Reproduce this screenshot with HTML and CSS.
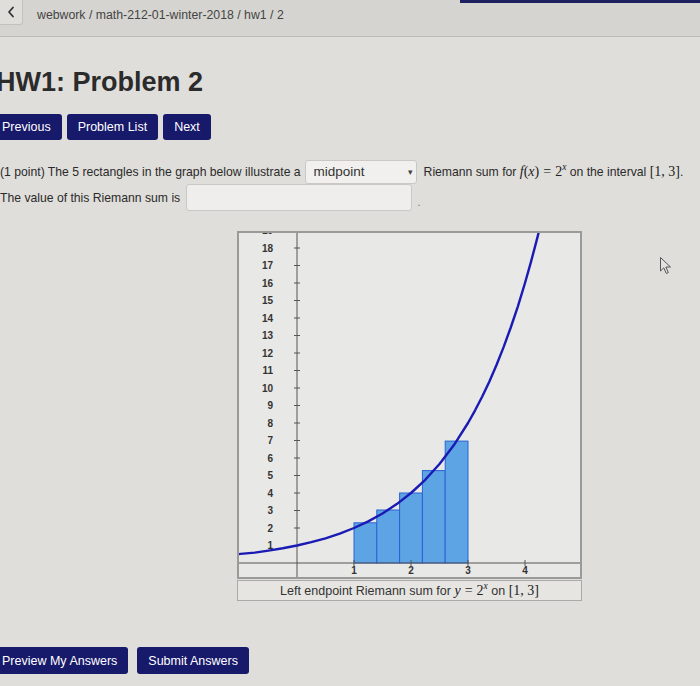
FILE: index.html
```html
<!DOCTYPE html>
<html lang="en">
<head>
<meta charset="utf-8">
<title>HW1: Problem 2</title>
<link rel="stylesheet" href="styles.css">
</head>
<body>
<header class="topbar">
  <a class="back" href="#"><svg width="8" height="12" viewBox="0 0 8 12"><path d="M6 1.5 L2 6 L6 10.5" fill="none" stroke="#333" stroke-width="1.8" stroke-linecap="round" stroke-linejoin="round"/></svg></a>
  <span class="crumbs">webwork / math-212-01-winter-2018 / hw1 / 2</span>
  <div class="strip"></div>
</header>
<main class="page">
  <h1>HW1: Problem 2</h1>
  <nav class="probnav">
    <button class="btn first">Previous</button>
    <button class="btn">Problem List</button>
    <button class="btn">Next</button>
  </nav>
  <div class="line1">
    <span>(1 point) The 5 rectangles in the graph below illustrate a</span>
    <span class="select">midpoint<span class="caret">&#9662;</span></span>
    <span class="after">Riemann sum for <span class="math"><i>f</i>(<i>x</i>)<span class="eq">=</span>2<sup><i>x</i></sup></span> on the interval <span class="math">[1, 3]</span>.</span>
  </div>
  <div class="line2">
    <span>The value of this Riemann sum is</span>
    <span class="input"></span>
    <span class="dot">.</span>
  </div>
  <figure class="graph">
    <div class="plot">
      <svg width="341" height="344" viewBox="0 0 341 344">
        <g class="rects">
          <rect x="115" y="289.8" width="22.8" height="40.2"/>
          <rect x="137.8" y="277" width="22.8" height="53"/>
          <rect x="160.6" y="260" width="22.8" height="70"/>
          <rect x="183.4" y="237.6" width="22.8" height="92.4"/>
          <rect x="206.2" y="208.1" width="22.8" height="121.9"/>
        </g>
        <line x1="0" y1="330" x2="341" y2="330" class="axis"/>
        <line x1="58" y1="0" x2="58" y2="344" class="axis"/>
        <g class="ticks">
          <line x1="55" x2="61" y1="312.5" y2="312.5"/><line x1="55" x2="61" y1="295" y2="295"/>
          <line x1="55" x2="61" y1="277.5" y2="277.5"/><line x1="55" x2="61" y1="260" y2="260"/>
          <line x1="55" x2="61" y1="242.5" y2="242.5"/><line x1="55" x2="61" y1="225" y2="225"/>
          <line x1="55" x2="61" y1="207.5" y2="207.5"/><line x1="55" x2="61" y1="190" y2="190"/>
          <line x1="55" x2="61" y1="172.5" y2="172.5"/><line x1="55" x2="61" y1="155" y2="155"/>
          <line x1="55" x2="61" y1="137.5" y2="137.5"/><line x1="55" x2="61" y1="120" y2="120"/>
          <line x1="55" x2="61" y1="102.5" y2="102.5"/><line x1="55" x2="61" y1="85" y2="85"/>
          <line x1="55" x2="61" y1="67.5" y2="67.5"/><line x1="55" x2="61" y1="50" y2="50"/>
          <line x1="55" x2="61" y1="32.5" y2="32.5"/><line x1="55" x2="61" y1="15" y2="15"/>
          <line x1="115" x2="115" y1="327" y2="333"/><line x1="172" x2="172" y1="327" y2="333"/>
          <line x1="229" x2="229" y1="327" y2="333"/><line x1="286" x2="286" y1="327" y2="333"/>
        </g>
        <g class="ylab">
          <text x="34" y="316">1</text><text x="34" y="298.5">2</text><text x="34" y="281">3</text>
          <text x="34" y="263.5">4</text><text x="34" y="246">5</text><text x="34" y="228.5">6</text>
          <text x="34" y="211">7</text><text x="34" y="193.5">8</text><text x="34" y="176">9</text>
          <text x="34" y="158.5">10</text><text x="34" y="141">11</text><text x="34" y="123.5">12</text>
          <text x="34" y="106">13</text><text x="34" y="88.5">14</text><text x="34" y="71">15</text>
          <text x="34" y="53.5">16</text><text x="34" y="36">17</text><text x="34" y="18.5">18</text>
          <text x="34" y="1">19</text>
        </g>
        <g class="xlab">
          <text x="115" y="341">1</text><text x="172" y="341">2</text>
          <text x="229" y="341">3</text><text x="286" y="341">4</text>
        </g>
        <polyline class="curve" points="-2,321.5 1.5,320.9 15.75,319.6 29.5,317.6 43.75,315.3 58,312.5 72.25,309.2 86.5,305.3 100.75,300.6 115,295 129.25,288.4 143.5,280.5 157.75,271.1 172,260 186.25,246.8 200.5,231 214.75,212.3 229,190 236.1,177.3 243.25,163.5 250.4,148.5 257.5,132 264.6,114.1 271.75,94.5 278.9,73.3 286,50 291.7,29.9 297.4,8.4 300.3,-3"/>
      </svg>
    </div>
    <figcaption>Left endpoint Riemann sum for <span class="math"><i>y</i><span class="eq">=</span>2<sup><i>x</i></sup></span> on <span class="math">[1, 3]</span></figcaption>
  </figure>
  <div class="submit">
    <button class="btn big first">Preview My Answers</button>
    <button class="btn big">Submit Answers</button>
  </div>
</main>
<svg class="cursor" width="14" height="20" viewBox="0 0 14 20"><path d="M1.5 1.5 L1.5 15 L4.8 11.8 L7.3 17.5 L9.3 16.6 L6.9 11 L11.5 11 Z" fill="#e2e2e0" stroke="#555" stroke-width="1" stroke-linejoin="round"/></svg>
</body>
</html>
```

FILE: styles.css
```css
body {
  margin: 0;
  width: 700px;
  height: 686px;
  overflow: hidden;
  position: relative;
  background: #e0dedA;
  font-family: "Liberation Sans", Arial, sans-serif;
  color: #2a2a2a;
}

.topbar {
  position: relative;
  height: 36px;
  background: #d6d4d0;
  border-bottom: 1px solid #bdbbb7;
  display: flex;
  align-items: flex-start;
}

.back {
  width: 22px;
  height: 24px;
  background: #e0dedb;
  border-right: 1px solid #c3c1bd;
  border-bottom: 1px solid #c3c1bd;
  border-bottom-right-radius: 3px;
  display: flex;
  align-items: center;
  justify-content: center;
}

.crumbs {
  margin: 8px 0 0 14px;
  font-size: 12.3px;
  line-height: 14px;
  color: #444;
}

.strip {
  position: absolute;
  top: 0;
  left: 460px;
  width: 240px;
  height: 3px;
  background: #1e2160;
}

.page {
  display: flex;
  flex-direction: column;
  align-items: flex-start;
}

h1 {
  margin: 29px 0 0 -4px;
  font-size: 27px;
  line-height: 32px;
  font-weight: bold;
  color: #2b2b2b;
}

.probnav {
  display: flex;
  gap: 5px;
  margin-top: 16px;
}

.btn {
  height: 26px;
  padding: 0 11px;
  border: none;
  border-radius: 3px;
  background: #17196a;
  color: #fff;
  font-family: "Liberation Sans", Arial, sans-serif;
  font-size: 12.5px;
}

.btn.first {
  margin-left: -9px;
}

.line1 {
  margin-top: 20px;
  height: 24px;
  display: flex;
  align-items: center;
  font-size: 12.2px;
  white-space: nowrap;
}

.select {
  position: relative;
  margin-left: 4px;
  width: 102px;
  height: 22px;
  padding-left: 8px;
  border: 1px solid #c9c8c5;
  border-radius: 3px;
  background: #f1f0ee;
  font-size: 13.5px;
  line-height: 22px;
  color: #333;
}

.caret {
  position: absolute;
  right: 3px;
  top: 0;
  font-size: 9px;
  color: #444;
}

.after {
  margin-left: 7px;
}

.math {
  font-family: "Liberation Serif", "Times New Roman", serif;
  font-size: 14px;
  color: #222;
}

.math sup {
  font-size: 9.5px;
  vertical-align: 6px;
  line-height: 0;
}

.eq {
  margin: 0 4px;
}

.line2 {
  height: 27px;
  display: flex;
  align-items: center;
  font-size: 12.2px;
  white-space: nowrap;
}

.input {
  margin-left: 6px;
  width: 224px;
  height: 25px;
  border: 1px solid #c9c8c5;
  border-radius: 3px;
  background: #efeeec;
}

.dot {
  margin: 8px 0 0 5px;
  color: #888;
}

.graph {
  margin: 20px 0 0 237px;
}

.plot {
  width: 341px;
  height: 344px;
  border: 2px solid #9a9a98;
  background: #e8e8e6;
}

.plot svg {
  display: block;
  overflow: hidden;
}

.rects rect {
  fill: #5ca4e4;
  stroke: #2b62d2;
  stroke-width: 1;
}

.axis {
  stroke: #555;
  stroke-width: 1;
}

.ticks line {
  stroke: #555;
  stroke-width: 1;
}

.ylab text {
  font-family: "Liberation Sans", Arial, sans-serif;
  font-weight: bold;
  font-size: 10px;
  fill: #333;
  text-anchor: end;
}

.xlab text {
  font-family: "Liberation Sans", Arial, sans-serif;
  font-weight: bold;
  font-size: 10px;
  fill: #333;
  text-anchor: middle;
}

.curve {
  fill: none;
  stroke: #1a1ab4;
  stroke-width: 2.4;
  stroke-linejoin: round;
}

figcaption {
  width: 343px;
  height: 19px;
  margin-top: 1px;
  border: 1px solid #aaa;
  background: #e6e5e2;
  text-align: center;
  font-size: 12.5px;
  line-height: 19px;
  color: #333;
}

.submit {
  display: flex;
  gap: 9px;
  margin-top: 46px;
}

.btn.big {
  height: 27px;
  font-size: 12.5px;
}

.cursor {
  position: absolute;
  left: 659px;
  top: 256px;
}
```
